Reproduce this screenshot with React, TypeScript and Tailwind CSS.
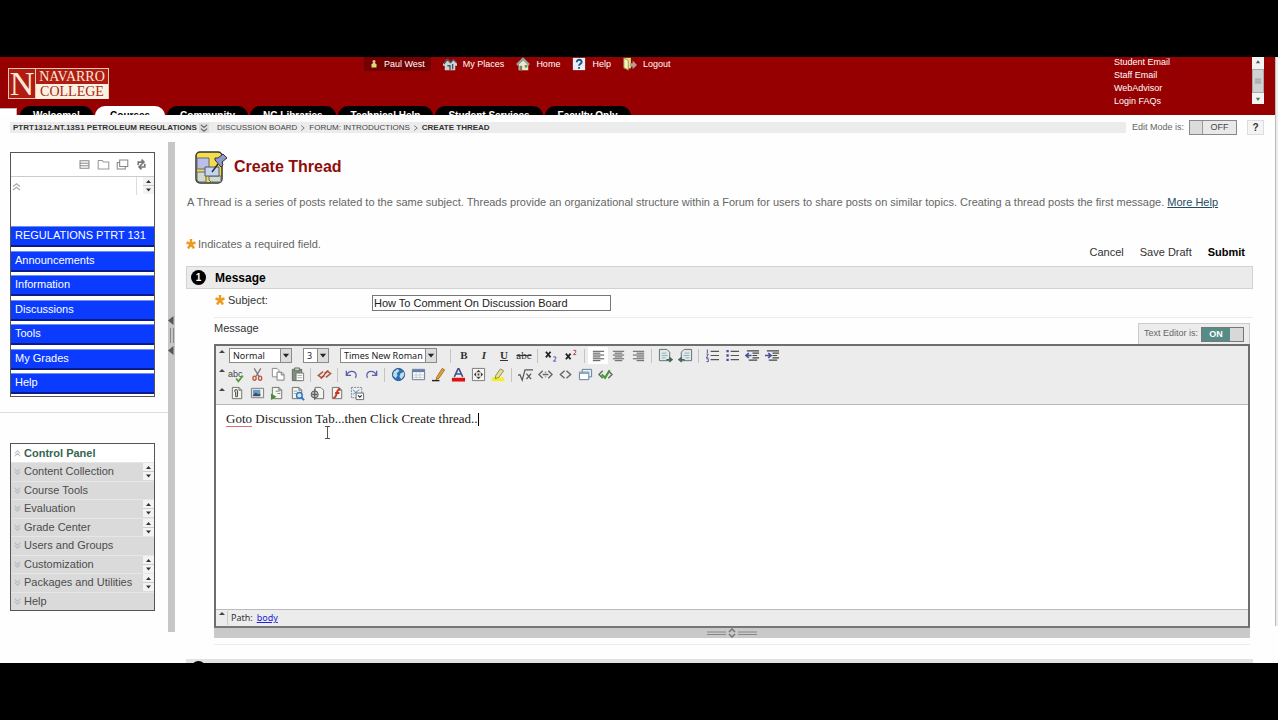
import React, { useState } from 'react';

type IconProps = { children: React.ReactNode; className?: string };

function Icon({ children, className = 'w-4 h-4' }: IconProps) {
  return (
    <svg viewBox="0 0 16 16" fill="none" className={`shrink-0 ${className}`} aria-hidden="true">
      {children}
    </svg>
  );
}

// Page with folded corner, shared by several editor icons
const sheet = <path d="M2.5 1.5h7l3 3v9h-10z M9.5 1.5v3h3" fill="#f4f4ee" stroke="#6b6f6b" />;

const icons: Record<string, React.ReactNode> = {
  sub: <><path d="M2 4l5 6M7 4l-5 6" stroke="#222" strokeWidth="1.900" /><path d="M10 9.500h2.500v2l-2.500 2.500h3" stroke="#4450a0" /></>,
  sup: <><path d="M2 6l5 6M7 6l-5 6" stroke="#222" strokeWidth="1.900" /><path d="M10 2.500h2.500v2l-2.500 2.500h3" stroke="#b04040" /></>,
  left: <path d="M2 3.500h12M2 5.500h8M2 7.500h12M2 9.500h8M2 11.500h12M2 13.500h8" stroke="#444" />,
  center: <path d="M2 3.500h12M4 5.500h8M2 7.500h12M4 9.500h8M2 11.500h12M4 13.500h8" stroke="#555" />,
  right: <path d="M2 3.500h12M6 5.500h8M2 7.500h12M6 9.500h8M2 11.500h12M6 13.500h8" stroke="#555" />,
  ltr: <><path d="M1.500 1.500h8l3 3v9h-11z" fill="#dcebe6" stroke="#667" /><path d="M4 5.500h5M4 8h6M4 10.500h4" stroke="#9ab" /><path d="M9 12.500h5M12 10l3 2.500-3 2.500" stroke="#465" strokeWidth="1.500" /></>,
  rtl: <><path d="M14.500 1.500h-8l-3 3v9h11z" fill="#dcebe6" stroke="#667" /><path d="M7 5.500h5M6 8h6M8 10.500h4" stroke="#9ab" /><path d="M7 12.500h-5M4 10l-3 2.500 3 2.500" stroke="#465" strokeWidth="1.500" /></>,
  ol: <><path d="M2.500 1.500v4M1.500 6.500h2l-2 4h2M1.500 11.500h2v3h-2" stroke="#4a4f9a" /><path d="M6 3.500h9M6 8h9M6 12.500h9" stroke="#555" strokeWidth="1.300" /></>,
  ul: <><path d="M1.500 2h2.500v2.500h-2.500zM1.500 6.700h2.500v2.500h-2.500zM1.500 11.400h2.500v2.500h-2.500z" fill="#4a4f9a" /><path d="M6 3.500h9M6 8h9M6 12.500h9" stroke="#555" strokeWidth="1.300" /></>,
  outdent: <><path d="M2 3h13M8 5.500h7M8 8h5M8 10.500h7M4 13h9" stroke="#444" strokeWidth="1.300" /><path d="M7 8h-6M4 5.500l-3 2.500 3 2.500" stroke="#4a4f9a" strokeWidth="1.700" /></>,
  indent: <><path d="M2 3h13M8 5.500h7M8 8h5M8 10.500h7M4 13h9" stroke="#444" strokeWidth="1.300" /><path d="M0 8h6M3.500 5.500l3 2.500-3 2.500" stroke="#4a4f9a" strokeWidth="1.700" /></>,
  cut: <><path d="M4.500 1.500l5 8.500M11.500 1.500l-5 8.500" stroke="#777" strokeWidth="1.300" /><ellipse cx="4.800" cy="12" rx="1.700" ry="2.200" stroke="#c0523c" strokeWidth="1.400" /><ellipse cx="10.800" cy="12" rx="1.700" ry="2.200" stroke="#c0523c" strokeWidth="1.400" /></>,
  copy: <><path d="M2.500 1.500h5l2 2v7h-7z" fill="#fff" stroke="#888" /><path d="M7.500 5.500h5l2.500 2.500v6h-7.500zM12 5.500v3h3" fill="#fff" stroke="#777" /></>,
  paste: <><path d="M2.500 2.500h10v12h-10z" fill="#7d9278" stroke="#596b56" /><path d="M5 1h5v3h-5z" fill="#ccc" stroke="#666" /><path d="M6.500 6.500h8v8h-8z" fill="#fff" stroke="#777" /><path d="M8 9h5M8 11.500h5" stroke="#aaa" /></>,
  link: <><path d="M6.500 5l-5 4 3.500 2.500 3-2.500M9.500 11l5-4-3.500-2.500-3 2.500" stroke="#a85b48" strokeWidth="1.700" /><path d="M4 12.500l8-9" stroke="#c73f2c" strokeWidth="1.300" /></>,
  undo: <path d="M2.500 4v5h5M3 8.500c2-5 9-5 10 0 .3 1-.2 2-1 3" stroke="#5960a8" strokeWidth="1.400" />,
  redo: <path d="M13.500 4v5h-5M13 8.500c-2-5-9-5-10 0-.3 1 .2 2 1 3" stroke="#5960a8" strokeWidth="1.400" />,
  globe: <><circle cx="8" cy="8" r="6.500" fill="#2d71b3" stroke="#22517f" /><path d="M3 5l4-3 2 2-3 3 1 2-2 3-3-3zM10 7l4-2v4l-3 4-2-3z" fill="#bfdcef" /></>,
  table: <><path d="M1.500 2.500h13v11h-13z" fill="#fff" stroke="#63718c" /><path d="M2 3h12v2.500h-12z" fill="#5d7fb0" /><path d="M2 8.500h12M2 11h12M5.500 5v8M9.500 5v8" stroke="#c3c8cf" /></>,
  pencil: <><path d="M1 14.500h8" stroke="#222" strokeWidth="1.500" /><path d="M6 11l6-9.500 2.500 1.500-6 9-3 1.500z" fill="#e7a43a" stroke="#a06820" /></>,
  color: <><path d="M3.500 10.500l4-8.500h1l4 8.500M5 7.500h6" stroke="#42518f" strokeWidth="1.700" /><path d="M1 11.500h14v4h-14z" fill="#e01010" /></>,
  anchor: <><path d="M1.500 1.500h13v13h-13z" fill="#f6f6f2" stroke="#777" /><path d="M8 3l2.500 2.500h-5zM8 13l2.500-2.500h-5zM3 8l2.500-2.500v5zM13 8l-2.500-2.500v5zM7 7h2v2h-2z" fill="#444" /></>,
  marker: <><path d="M1 11h13v4h-13z" fill="#f4f01c" /><path d="M5 9l5-7 3.500 2-5 7-4 1.500z" fill="#e6df8e" stroke="#8d8960" /></>,
  math: <><path d="M0 9l2-1 2.500 6 3-11h8.500" stroke="#555" strokeWidth="1.300" /><path d="M9 7l5 6M14 7l-5 6" stroke="#555" strokeWidth="1.300" /></>,
  tagline: <path d="M5 4l-4 4 4 4M11 4l4 4-4 4M5 8h6M8 5v1M8 10v1" stroke="#666" strokeWidth="1.500" />,
  tag: <path d="M7 4l-4.500 4 4.500 4M9 4l4.500 4-4.500 4" stroke="#666" strokeWidth="1.500" />,
  windows: <><path d="M4.500 2.500h10v8h-10z" fill="#e7f0f6" stroke="#5d7c96" /><path d="M1.500 5.500h10v8h-10z" fill="#fff" stroke="#5d7c96" /><path d="M2 6h9v1.500h-9z" fill="#85a8c2" /></>,
  validate: <><path d="M5 4l-4 4 4 4M11 4l4 4-4 4" stroke="#666" strokeWidth="1.500" /><path d="M4 8l3.500 3.500 5-8" stroke="#3f9b2d" strokeWidth="2.300" /></>,
  attach: <>{sheet}<path d="M5 6c0-3 3-3 3 0v4c0 2-2 2-2 0v-4" stroke="#555" strokeWidth="1.200" /></>,
  image: <><path d="M1.500 2.500h13v10h-13z" fill="#f3f3f3" stroke="#777" /><path d="M3 4h8v6h-8z" fill="#6d9bc4" /><path d="M3 10l3-3 3 2 2-1v3h-8z" fill="#31506a" /></>,
  media: <>{sheet}<path d="M1 8l6 3.500-6 3.500z" fill="#4a8b3c" /><path d="M6 5.500h4M8 8h3" stroke="#6a9160" /></>,
  search: <>{sheet}<path d="M4 5.500h4M4 8h3" stroke="#96a6b2" /><circle cx="10" cy="10" r="3" fill="#d3e9fa" stroke="#2e79ba" strokeWidth="1.500" /><path d="M12 12l3 3" stroke="#2e79ba" strokeWidth="2" /></>,
  audio: <><path d="M5.500 1.500h6l3 3v9h-9z" fill="#f4f4ee" stroke="#6b6f6b" /><circle cx="5" cy="9" r="3.800" fill="#bbb" stroke="#555" /><path d="M5 3v12M2 9h6" stroke="#555" /></>,
  flash: <>{sheet}<path d="M11 3c-4 0-3 4-5 8-.5 1-1 1.500-2.500 1.500M5.500 7.500h4.500" stroke="#cf2d20" strokeWidth="2" /></>,
  mashup: <><path d="M1.500 1.500h11v11h-11z" fill="#e8eff4" stroke="#71869a" strokeDasharray="2 1" /><path d="M3 4l8 7M3 9l7-5" stroke="#71869a" /><path d="M6.500 7.500h8v7h-8z" fill="#fff" stroke="#666" /><path d="M8.500 10l2 2 2-2" stroke="#333" strokeWidth="1.300" /></>,
};

const userLinks = [
  { label: 'Paul West', icon: <Icon className="w-2 h-3"><circle cx="8" cy="3" r="3" fill="#e3c69a" /><path d="M3 15v-6l3-3h4l3 3v6z" fill="#d7df75" /></Icon> },
  { label: 'My Places', icon: <Icon className="w-3.5 h-3.5"><path d="M0 8l5-6 4 4 3-3 4 4v3h-2v5h-12v-5h-2z" fill="#ccd4d8" /><path d="M1 8l4-5 4 4M5 10h3v5M11 8v6M9 6l3-3 4 4" stroke="#45525c" strokeWidth="1.500" /></Icon> },
  { label: 'Home', icon: <Icon className="w-3.5 h-3.5"><path d="M3 8v7h11v-7l-5-5z" fill="#efe9c4" /><path d="M1 9l7-7 7 7" stroke="#8fa8a0" strokeWidth="2.500" /><path d="M4 10h3v5h-3zM10 9h3v3h-3z" fill="#6b8a6d" /></Icon> },
  { label: 'Help', icon: <Icon className="w-3.5 h-3.5"><path d="M1 1h14v14h-14z" fill="#e8f0f5" /><path d="M5.500 6c0-4 6-3.500 5.500 0-.3 1.500-3 2-3 4M8 11.500v2" stroke="#1c5789" strokeWidth="2.200" /></Icon> },
  { label: 'Logout', icon: <Icon className="w-3.5 h-3.5"><path d="M1 1h8v12h-8z" fill="#e5e48a" /><path d="M1 1l5 3v11l-5-3z" fill="#f6f3b5" stroke="#93904e" /><path d="M8 7h3v-3l5 5-5 5v-3h-3z" fill="#b39d95" /></Icon> },
];

const tabs = ['Welcome!', 'Courses', 'Community', 'NC Libraries', 'Technical Help', 'Student Services', 'Faculty Only'];
const quickLinks = ['Student Email', 'Staff Email', 'WebAdvisor', 'Login FAQs'];
const courseMenu = ['REGULATIONS PTRT 131', 'Announcements', 'Information', 'Discussions', 'Tools', 'My Grades', 'Help'];
const controlPanel = [
  { label: 'Content Collection', spinner: true },
  { label: 'Course Tools', spinner: false },
  { label: 'Evaluation', spinner: true },
  { label: 'Grade Center', spinner: true },
  { label: 'Users and Groups', spinner: false },
  { label: 'Customization', spinner: true },
  { label: 'Packages and Utilities', spinner: true },
  { label: 'Help', spinner: false },
];

function Logo() {
  return (
    <a href="#" aria-label="Navarro College" className="flex w-[101px] h-[31px] border border-[#e9c9b4] bg-[#b01c12] font-['Liberation_Serif',serif]">
      <span className="w-[27px] text-center text-[34px] leading-[29px] text-[#fbe9d8] border-r border-[#e9c9b4]">N</span>
      <span className="flex-1 flex flex-col text-center">
        <span className="h-[15px] text-[14px] leading-[16px] text-[#fbe9d8]">NAVARRO</span>
        <span className="flex-1 text-[14px] leading-[15px] text-[#a8261a] bg-[#fbf1e0]">COLLEGE</span>
      </span>
    </a>
  );
}

function Header() {
  return (
    <header className="bg-[#970000] text-white overflow-hidden">
      <div className="h-[49px] flex items-start">
        <div className="w-[364px] pl-2 pt-[11px]">
          <Logo />
        </div>
        <nav className="flex-1 flex">
          {userLinks.map((link, i) => (
            <a
              key={link.label}
              href="#"
              className={`h-[14px] px-[6px] flex items-center gap-[6px] text-[9px] leading-[14px] ${i === 0 ? 'bg-[#730000] mr-[6px]' : ''}`}
            >
              {link.icon}
              {link.label}
            </a>
          ))}
        </nav>
        <div className="w-[161px] flex justify-between items-start">
          <ul className="text-[9px] leading-[13px] -mt-px">
            {quickLinks.map((l) => (
              <li key={l}><a href="#">{l}</a></li>
            ))}
          </ul>
          <div className="w-[12px] h-[47px] mr-[11px] flex flex-col justify-between items-center bg-[#f4f4f4]">
            <Icon className="w-[10px] h-[10px]"><path d="M8 5l3.500 5h-7z" fill="#555" /></Icon>
            <Icon className="w-[12px] h-[24px] bg-[#d2d2d2] border border-[#aaa]"><path d="M3 5h10M3 8h10M3 11h10" stroke="#777" /></Icon>
            <Icon className="w-[10px] h-[10px]"><path d="M8 11l3.500-5h-7z" fill="#488048" /></Icon>
          </div>
        </div>
      </div>
      <div className="h-[9px] flex gap-[2px] overflow-hidden">
        <span className="w-[17px] mt-[2px] mr-px shrink-0 bg-white border-t border-r border-[#bbb]" />
        {tabs.map((t, i) => (
          <a
            key={t}
            href="#"
            className={`h-[20px] rounded-t-[10px] text-[10px] leading-[20px] font-bold whitespace-nowrap ${i === 1 ? 'bg-white text-black px-[15px]' : 'bg-black text-white px-[13px]'}`}
          >
            {t}
          </a>
        ))}
      </div>
    </header>
  );
}

function Breadcrumbs() {
  const [editMode, setEditMode] = useState(false);
  return (
    <div className="h-[25px] flex items-center pl-[10px] pr-[11px] text-[#444]">
      <nav className="flex-1 h-[11px] flex items-center pl-[3px] bg-[#ececec] text-[8px] whitespace-nowrap">
        <a href="#" className="font-bold text-[#333]">PTRT1312.NT.13S1 PETROLEUM REGULATIONS</a>
        <Icon className="w-[10px] h-[10px] mx-[2px] bg-[#ddd]"><path d="M3 3l5 4 5-4M3 9l5 4 5-4" stroke="#666" strokeWidth="2" /></Icon>
        <a href="#" className="ml-[6px]">DISCUSSION BOARD</a>
        <Icon className="w-[10px] h-[10px] mx-px"><path d="M5 4l5 4-5 4" stroke="#777" strokeWidth="1.500" /></Icon>
        <a href="#">FORUM: INTRODUCTIONS</a>
        <Icon className="w-[10px] h-[10px] mx-px"><path d="M5 4l5 4-5 4" stroke="#777" strokeWidth="1.500" /></Icon>
        <span className="font-bold text-[#333]">CREATE THREAD</span>
      </nav>
      <div className="flex items-center pl-[6px] text-[9px] text-[#666]">
        <span>Edit Mode is:</span>
        <button
          type="button"
          aria-label="Edit Mode"
          onClick={() => setEditMode(!editMode)}
          className="ml-[5px] w-[48px] h-[15px] flex border border-[#888] bg-[#e9e9e9] leading-[13px] text-[#444]"
        >
          <span className="w-[13px] h-full bg-[#dcdcdc] border-r border-[#999]" />
          <span className="flex-1 text-[9px]">{editMode ? 'ON' : 'OFF'}</span>
        </button>
        <button type="button" className="ml-[10px] w-[17px] h-[15px] border border-[#ddd] bg-[#f4f4f4] text-[10px] leading-[13px] font-bold text-[#333]">?</button>
      </div>
    </div>
  );
}

function Spinner() {
  return (
    <svg viewBox="0 0 11 17" className="w-[11px] h-[17px] shrink-0" aria-hidden="true">
      <path d="M0 0h11v17h-11z" fill="#f3f3f3" />
      <path d="M0 8.500h11" stroke="#ccc" />
      <path d="M5.500 3l2.500 3h-5zM5.500 14.500l2.500-3h-5z" fill="#333" />
    </svg>
  );
}

function Sidebar() {
  return (
    <aside className="w-[168px] shrink-0 pt-[10px]">
      <section className="ml-[10px] w-[145px] border border-[#555] bg-white">
        <div className="h-[24px] flex items-center justify-end gap-[6px] pr-[6px] border-b border-[#ccc]">
          <Icon className="w-[13px] h-[13px]"><path d="M2 3.500h12M2 6.500h12M2 9.500h12M2 12.500h12M2.500 3v10M13.500 3v10" stroke="#888" strokeWidth="1.300" /></Icon>
          <Icon className="w-[13px] h-[13px]"><path d="M1.500 3h5l1.500 2h6.500v8.500h-13z" stroke="#999" strokeWidth="1.300" /></Icon>
          <Icon className="w-[13px] h-[13px]"><path d="M4.500 2.500h10v8h-10zM4 5.500h-2.500v8h10v-2.500" stroke="#888" strokeWidth="1.300" /></Icon>
          <Icon className="w-[13px] h-[13px]"><path d="M4 9v-4h6M8 2l3 3-3 3M12 7v4h-6M8 8l-3 3 3 3" stroke="#777" strokeWidth="2" /></Icon>
        </div>
        <div className="h-[49px] flex items-start">
          <Icon className="w-[11px] h-[11px] mt-[4px]"><path d="M3 8l5-4 5 4M3 13l5-4 5 4" stroke="#aaa" strokeWidth="1.800" /></Icon>
          <span className="flex-1 h-[18px] mr-[6px] border-r border-[#ddd]" />
          <Spinner />
        </div>
        <ul className="h-[168px] mb-[2px] flex flex-col justify-between">
          {courseMenu.map((item) => (
            <li key={item}>
              <a
                href="#"
                className="block h-[21px] pl-[4px] border-t border-b-2 border-t-[#6f8cf0] border-b-[#0a1c8c] bg-[#0b3bff] text-white text-[11px] leading-[17px] whitespace-nowrap"
              >
                {item}
              </a>
            </li>
          ))}
        </ul>
      </section>
      <hr className="mt-[15px] border-[#ddd]" />
      <section className="ml-[10px] mt-[30px] w-[145px] border border-[#555] bg-white">
        <h2 className="h-[18px] flex items-center gap-px pl-px text-[11px] font-bold text-[#35654f]">
          <Icon className="w-[11px] h-[11px]"><path d="M4 8l4-4 4 4M4 12l4-4 4 4" stroke="#bbb" strokeWidth="1.500" /></Icon>
          Control Panel
        </h2>
        <ul className="h-[148px] flex flex-col">
          {controlPanel.map((item) => (
            <li key={item.label} className="flex-1 flex items-center gap-px pl-px border-t border-[#e6e6e6] bg-[#dadada]">
              <Icon className="w-[11px] h-[11px]"><path d="M4 4l4 4 4-4M4 8l4 4 4-4" stroke="#b5b5b5" strokeWidth="1.500" /></Icon>
              <a href="#" className="flex-1 text-[11px] leading-[17px] text-[#4c4c4c] whitespace-nowrap">{item.label}</a>
              {item.spinner && <Spinner />}
            </li>
          ))}
        </ul>
      </section>
    </aside>
  );
}

function Divider() {
  return (
    <div className="w-[7px] h-[490px] shrink-0 bg-[#c6c6c6] pt-[174px]">
      <svg viewBox="0 0 7 40" className="w-[7px] h-[40px]" aria-hidden="true">
        <path d="M5.500 0v9l-5.500-4.500zM5.500 30v9l-5.500-4.500z" fill="#555" />
        <path d="M2.500 12v15M5.500 12v15" stroke="#888" />
      </svg>
    </div>
  );
}

function Star() {
  return (
    <svg viewBox="0 0 10 10" className="w-[10px] h-[10px] shrink-0" aria-hidden="true">
      <path d="M5 0v5M0.500 3.500l4.500 1.500M9.500 3.500l-4.500 1.500M2 9.500l3-4.500M8 9.500l-3-4.500" stroke="#f09a1c" strokeWidth="2.400" />
    </svg>
  );
}

function ToolSelect({ label, value, className }: { label: string; value: string; className: string }) {
  return (
    <span className={`h-[15px] flex items-center border border-[#8a8a8a] bg-white ${className}`}>
      <select
        aria-label={label}
        defaultValue={value}
        className="flex-1 min-w-0 h-[13px] pl-[3px] appearance-none bg-white text-[9px] leading-[13px] text-[#222] font-['Noto_Sans',sans-serif]"
      >
        <option>{value}</option>
      </select>
      <Icon className="w-[11px] h-[13px] bg-[#dcdcdc] border-l border-[#8a8a8a]"><path d="M3 5h10l-5 6z" fill="#222" /></Icon>
    </span>
  );
}

function Tool({ name, active = false }: { name: string; active?: boolean }) {
  return (
    <button type="button" aria-label={name} className={`w-5 h-[17px] flex items-center justify-center ${active ? 'bg-white' : ''}`}>
      <Icon className="w-[15px] h-[15px]">{icons[name]}</Icon>
    </button>
  );
}

const Sep = () => <span className="w-[7px] h-[14px] flex justify-center"><span className="w-px bg-[#c4c4c4]" /></span>;

const Handle = () => (
  <svg viewBox="0 0 6 4" className="w-[6px] h-[4px] mb-[8px] mx-[2px] shrink-0" aria-hidden="true">
    <path d="M3 0l3 3h-6z" fill="#444" />
  </svg>
);

function Toolbar() {
  const letter = "w-5 text-center text-[11px] leading-[17px] text-[#333] font-['Liberation_Serif',serif]";
  return (
    <div className="h-[59px] pl-px bg-[#ececec] border-b border-[#bbb]">
      <div className="h-[19px] flex items-center">
        <Handle />
        <ToolSelect label="Format" value="Normal" className="w-[63px] ml-[2px]" />
        <ToolSelect label="Font size" value="3" className="w-[26px] ml-[11px]" />
        <ToolSelect label="Font" value="Times New Roman" className="w-[97px] ml-[11px]" />
        <span className="w-[10px]" />
        <Sep />
        <button type="button" className={`${letter} font-bold`}>B</button>
        <button type="button" className={`${letter} font-bold italic`}>I</button>
        <button type="button" className={`${letter} font-bold underline`}>U</button>
        <button type="button" className={`${letter} line-through`}>abc</button>
        <Sep />
        <Tool name="sub" />
        <Tool name="sup" />
        <Sep />
        <Tool name="left" active />
        <Tool name="center" />
        <Tool name="right" />
        <Sep />
        <Tool name="ltr" />
        <Tool name="rtl" />
        <Sep />
        <Tool name="ol" />
        <Tool name="ul" />
        <Tool name="outdent" />
        <Tool name="indent" />
      </div>
      <div className="h-[19px] flex items-center">
        <Handle />
        <button type="button" aria-label="Check spelling" className="relative w-5 h-[17px] pl-px text-[9px] leading-[9px] text-[#444] text-left">
          abc
          <Icon className="absolute left-[8px] top-[8px] w-[9px] h-[9px]"><path d="M2 8l4 5 8-10" stroke="#4d9a35" strokeWidth="3" /></Icon>
        </button>
        {['cut', 'copy', 'paste'].map((n) => <Tool key={n} name={n} />)}
        <Sep />
        <Tool name="link" />
        <Sep />
        <Tool name="undo" />
        <Tool name="redo" />
        <Sep />
        {['globe', 'table', 'pencil', 'color', 'anchor', 'marker'].map((n) => <Tool key={n} name={n} />)}
        <Sep />
        {['math', 'tagline', 'tag', 'windows', 'validate'].map((n) => <Tool key={n} name={n} />)}
      </div>
      <div className="h-[19px] flex items-center">
        <Handle />
        {['attach', 'image', 'media', 'search', 'audio', 'flash', 'mashup'].map((n) => <Tool key={n} name={n} />)}
      </div>
    </div>
  );
}

function Editor() {
  return (
    <div>
      <div className="border-2 border-[#6e6e6e] border-b-[#777]">
        <Toolbar />
        <div role="textbox" aria-label="Message" className="relative h-[204px] pl-[10px] pt-[6px] bg-white text-[13px] leading-[16px] text-[#222] font-['Liberation_Serif','Times_New_Roman',serif]">
          <span className="border-b border-[#e07070]">Goto</span> Discussion Tab...then Click Create thread..
          <span className="inline-block w-px h-[13px] bg-black align-text-bottom" />
          <svg viewBox="0 0 7 13" className="absolute left-[108px] top-[21px] w-[7px] h-[13px]" aria-hidden="true">
            <path d="M1 .5h5M3.500 .5v12M1 12.500h5" stroke="#555" />
          </svg>
        </div>
        <div className="h-[17px] flex items-center pl-px border-t border-[#bbb] bg-[#ececec] text-[9px] text-[#333] font-['Noto_Sans',sans-serif]">
          <Handle />
          <span className="pl-[3px] border-l border-[#ccc]">Path:</span>
          <a href="#" className="ml-[4px] text-[#2222dd] underline">body</a>
        </div>
      </div>
      <div className="h-[10px] flex justify-center bg-[#c9c9c9]">
        <svg viewBox="0 0 52 10" className="w-[52px] h-[10px]" aria-hidden="true">
          <path d="M1 4h19M1 6.500h19M32 4h19M32 6.500h19" stroke="#888" />
          <path d="M23 4l3-3 3 3M23 6l3 3 3-3" stroke="#777" strokeWidth="1.500" fill="none" />
        </svg>
      </div>
    </div>
  );
}

function CreateThread() {
  const [subject, setSubject] = useState('How To Comment On Discussion Board');
  const [editorOn, setEditorOn] = useState(true);
  return (
    <main className="flex-1 min-w-0 pl-[11px] pr-[22px] pt-[7px] text-[11px] text-[#333]">
      <div className="h-[36px] flex items-center gap-[5px] pl-[7px]">
        <svg viewBox="0 0 36 36" fill="none" className="w-[36px] h-[36px]" aria-hidden="true">
          <rect x="3" y="3" width="26" height="31" rx="4" fill="#f3dd4d" stroke="#333" strokeWidth="1.500" />
          <path d="M4 9h12v11h-12z" fill="#b9bfe8" stroke="#667" />
          <path d="M4 23h9v10h-7l-2-2zM16 27h12v6h-10l-2-2z" fill="#cfdccb" stroke="#667" />
          <path d="M12 18h14v9h-14z" fill="#c3d5f3" stroke="#556" />
          <path d="M19 23l6-8" stroke="#333" strokeWidth="1.500" />
          <path d="M22 11l6 7 2-2-1-3 5-4-4-4-5 4-3 0z" fill="#8d9bd0" stroke="#334" />
        </svg>
        <h1 className="text-[16px] font-bold text-[#8f0c0c]">Create Thread</h1>
      </div>
      <p className="mt-[9px] pl-px leading-[16px] text-[#666]">
        A Thread is a series of posts related to the same subject. Threads provide an organizational structure within a Forum for users to share posts on similar topics. Creating a thread posts the first message.{' '}
        <a href="#" className="text-[#264a63] underline">More Help</a>
      </p>
      <p className="mt-[26px] h-[16px] flex items-center gap-[2px] text-[#666]">
        <Star />
        Indicates a required field.
      </p>
      <div className="h-[14px] flex items-center justify-end -mt-[7px] pr-[8px] gap-[16px]">
        <button type="button">Cancel</button>
        <button type="button">Save Draft</button>
        <button type="button" className="font-bold text-black">Submit</button>
      </div>
      <h2 className="mt-[7px] h-[23px] flex items-center gap-[9px] pl-[4px] border border-[#d2d2d2] bg-[#ebebeb] text-[12px] font-bold text-black">
        <span className="w-[15px] h-[15px] rounded-full bg-black text-white text-[10px] leading-[15px] text-center">1</span>
        Message
      </h2>
      <div className="ml-[28px] h-[29px] flex items-center border-b border-[#ececec]">
        <label htmlFor="subject" className="w-[158px] flex items-center gap-[3px] pl-px pb-[6px]">
          <Star />
          Subject:
        </label>
        <input
          id="subject"
          value={subject}
          onChange={(e) => setSubject(e.target.value)}
          className="w-[239px] h-[16px] px-px border border-[#777] bg-white text-[11px] text-[#222]"
        />
      </div>
      <div className="ml-[28px] mr-[3px] h-[26px] flex justify-between">
        <span className="pt-[2px]">Message</span>
        <div className="mt-[5px] w-[112px] h-[21px] flex items-center justify-between px-[5px] border border-b-0 border-[#ccc] bg-[#ececec] text-[9px] text-[#666]">
          Text Editor is:
          <button
            type="button"
            aria-label="Text Editor"
            onClick={() => setEditorOn(!editorOn)}
            className="w-[43px] h-[15px] flex border border-[#777] leading-[13px] text-[9px] font-bold text-white"
          >
            <span className="flex-1 bg-[#558c85]">{editorOn ? 'ON' : 'OFF'}</span>
            <span className="w-[13px] h-full bg-[#d8d8d8]" />
          </button>
        </div>
      </div>
      <div className="ml-[28px] mr-[3px] pb-[6px] border-b border-[#ececec]">
        <Editor />
      </div>
      <div className="mt-[14px] h-[4px] pl-[5px] overflow-hidden bg-[#e2e2e2]">
        <span className="block mt-[2px] w-[15px] h-[15px] rounded-full bg-black" />
      </div>
    </main>
  );
}

export default function App() {
  return (
    <div className="min-h-screen flex flex-col bg-black font-['Liberation_Sans',Arial,sans-serif]">
      <div className="h-[57px]" />
      <div className="flex bg-[#fdfefd]">
        <div className="flex-1 min-w-0">
          <Header />
          <Breadcrumbs />
          <div className="flex items-start pt-[2px]">
            <Sidebar />
            <Divider />
            <CreateThread />
          </div>
        </div>
        <div className="w-[3px] h-[569px] border-l border-[#bbb] bg-[#ececec]" />
      </div>
    </div>
  );
}
